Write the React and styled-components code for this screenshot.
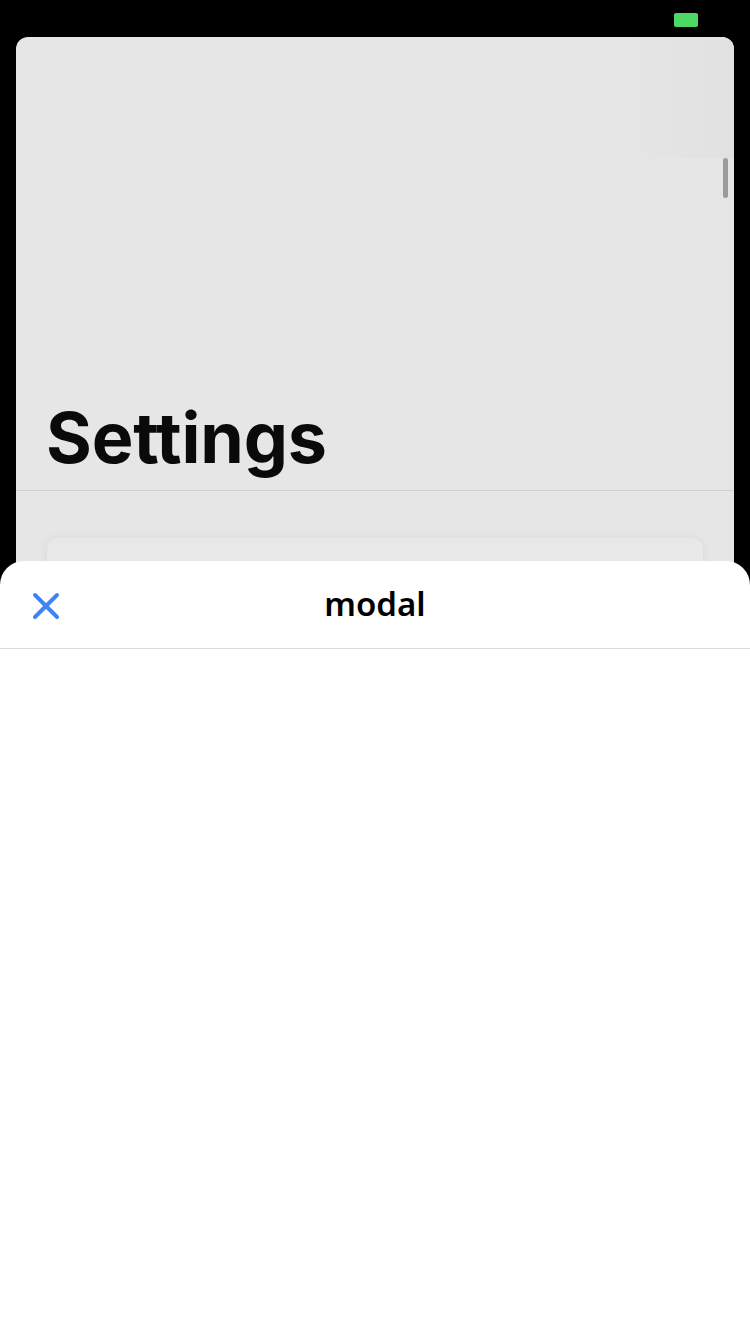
import styled, { createGlobalStyle } from 'styled-components';

const GlobalStyle = createGlobalStyle`
  html, body {
    margin: 0;
    padding: 0;
    background: #000;
  }
  body {
    font-family: 'Inter', 'Noto Sans', sans-serif;
  }
`

const App = () => {
  return (
    <>
      <GlobalStyle />
      <Screen>
        <StatusBar>
          <Battery />
        </StatusBar>

        <Card>
          <TopGlow />
          <ScrollThumb />
          <Header>
            <Title>Settings</Title>
          </Header>
          <Content>
            <Group />
          </Content>
        </Card>

        <Sheet>
          <SheetHeader>
            <CloseButton aria-label="close">
              <svg width="28" height="28" viewBox="0 0 28 28" fill="none">
                <path
                  d="M3 3 L25 25 M25 3 L3 25"
                  stroke="#3d85f6"
                  strokeWidth="4"
                  strokeLinecap="round"
                />
              </svg>
            </CloseButton>
            <SheetTitle>modal</SheetTitle>
          </SheetHeader>
        </Sheet>
      </Screen>
    </>
  )
}

const Screen = styled.div`
  position: relative;
  width: 750px;
  height: 1334px;
  overflow: hidden;
  background: #000;
  display: flex;
  flex-direction: column;
`
const StatusBar = styled.div`
  height: 37px;
  display: flex;
  justify-content: flex-end;
  align-items: flex-start;
  padding: 13px 52px 0 0;
  box-sizing: border-box;
`
const Battery = styled.div`
  width: 24px;
  height: 14px;
  border-radius: 2px;
  background: #4cd964;
`
const Card = styled.div`
  position: relative;
  flex: 1;
  margin: 0 16px;
  border-radius: 12px 12px 0 0;
  background: #e6e6e6;
  overflow: hidden;
  display: flex;
  flex-direction: column;
`
const TopGlow = styled.div`
  position: absolute;
  top: 0;
  right: 0;
  width: 110px;
  height: 121px;
  background: linear-gradient(to right, rgba(225, 225, 225, 0), #e1e1e1);
`
const ScrollThumb = styled.div`
  position: absolute;
  top: 121px;
  right: 6px;
  width: 5px;
  height: 40px;
  border-radius: 3px;
  background: #9a9a9a;
`
const Header = styled.div`
  height: 454px;
  display: flex;
  align-items: flex-end;
  padding: 0 0 10px 30px;
  box-sizing: border-box;
  border-bottom: 1px solid #cfcfcf;
`
const Title = styled.h1`
  margin: 0;
  font-family: 'Inter', 'Liberation Sans', sans-serif;
  font-size: 70px;
  font-weight: 700;
  letter-spacing: -0.2px;
  line-height: 1.2;
  color: #0a0a0a;
`
const Content = styled.div`
  padding: 47px 31px 0;
`
const Group = styled.div`
  height: 200px;
  border-radius: 12px;
  background: #e8e8e8;
  box-shadow: 0 0 10px rgba(0, 0, 0, 0.06);
`
const Sheet = styled.div`
  position: absolute;
  top: 561px;
  left: 0;
  right: 0;
  bottom: 0;
  background: #fff;
  border-radius: 24px 24px 0 0;
`
const SheetHeader = styled.div`
  position: relative;
  height: 88px;
  display: flex;
  align-items: center;
  justify-content: center;
  border-bottom: 1px solid #dadada;
  box-sizing: border-box;
`
const CloseButton = styled.button`
  position: absolute;
  left: 32px;
  top: 31px;
  padding: 0;
  border: none;
  background: none;
  display: flex;
`
const SheetTitle = styled.div`
  font-family: 'Noto Sans', 'Open Sans', sans-serif;
  font-size: 33px;
  font-weight: 600;
  color: #000;
  margin-top: -2px;
`

export default App;
